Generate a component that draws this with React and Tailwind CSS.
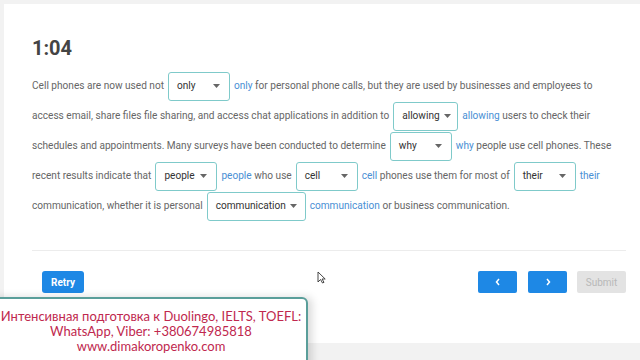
import React from "react";

function Sel({ value, w = "w-[62px]" }) {
  return (
    <span
      className={`inline-flex ${w} h-[29px] items-center justify-between align-middle border border-[#7fcaca] rounded-[3px] pl-[8px] pr-[9px] mx-[4px] text-[#333] bg-white whitespace-nowrap`}
    >
      <span>{value}</span>
      <svg width="7" height="4" viewBox="0 0 7 4" className="ml-[4px] shrink-0">
        <path d="M0 0 L7 0 L3.5 4 Z" fill="#666" />
      </svg>
    </span>
  );
}

function Ans({ children }) {
  return <span className="text-[#4a8fd4]">{children}</span>;
}

export default function App() {
  return (
    <div
      className="relative w-[640px] h-[360px] overflow-hidden bg-[#f2f2f2]"
      style={{ fontFamily: "Roboto, 'Liberation Sans', sans-serif" }}
    >
      <div className="ml-[4px] mt-[4px] h-[339px] bg-white pl-[28px] pr-[14px] pt-[32px]">
        <div className="text-[20px] font-bold text-[#444] leading-[24px]">1:04</div>
        <div className="mt-[11px] w-[590px] text-[10.1px] leading-[30px] text-[#666]">
          Cell phones are now used not<Sel value="only" />
          <Ans>only</Ans> for personal phone calls, but they are used by businesses and employees to
          access email, share files file sharing, and access chat applications in addition to
          <Sel value="allowing" w="w-[65px]" />
          <Ans>allowing</Ans> users to check their schedules and appointments. Many surveys have been
          conducted to determine<Sel value="why" />
          <Ans>why</Ans> people use cell phones. These recent results indicate that
          <Sel value="people" />
          <Ans>people</Ans> who use<Sel value="cell" />
          <Ans>cell</Ans> phones use them for most of<Sel value="their" />
          <Ans>their</Ans> communication, whether it is personal
          <Sel value="communication" w="w-[99px]" />
          <Ans>communication</Ans> or business communication.
        </div>
        <div className="mt-[29px] h-px bg-[#ececec] w-[594px]" />
        <div className="mt-[20px] flex items-center w-[594px] pl-[10px]">
          <button className="h-[22px] w-[42px] rounded-[3px] bg-[#1e88e5] text-white text-[10px] font-bold">
            Retry
          </button>
          <div className="flex-1" />
          <button className="h-[22px] w-[39px] rounded-[2px] bg-[#1e88e5] flex items-center justify-center">
            <svg width="8" height="8" viewBox="0 0 8 8">
              <path d="M5 1 L2.5 4 L5 7" stroke="white" strokeWidth="1.5" fill="none" />
            </svg>
          </button>
          <button className="ml-[11px] h-[22px] w-[39px] rounded-[2px] bg-[#1e88e5] flex items-center justify-center">
            <svg width="8" height="8" viewBox="0 0 8 8">
              <path d="M3 1 L5.5 4 L3 7" stroke="white" strokeWidth="1.5" fill="none" />
            </svg>
          </button>
          <button className="ml-[10px] h-[22px] w-[49px] rounded-[2px] bg-[#e3e3e3] text-[#b8b8b8] text-[10px]">
            Submit
          </button>
        </div>
      </div>

      <svg
        className="absolute left-[317px] top-[271px]"
        width="9"
        height="13"
        viewBox="0 0 9 13"
      >
        <path d="M1 1 L1 11 L3.5 8.5 L5.5 12 L7 11.3 L5 8 L8.2 8 Z" fill="white" stroke="#333" strokeWidth="0.9" />
      </svg>

      <div
        className="absolute left-[-10px] top-[297px] w-[318px] h-[80px] bg-white border-2 border-[#5a9e9a] rounded-tr-[6px] shadow-[4px_0_8px_rgba(0,0,0,0.15)] pt-[10px] pl-[4px] text-center text-[13px] leading-[15px] text-[#c0284e] whitespace-nowrap"
        style={{ fontFamily: "Lato, 'Open Sans', sans-serif" }}
      >
        <div>Интенсивная подготовка к Duolingo, IELTS, TOEFL:</div>
        <div>WhatsApp, Viber: +380674985818</div>
        <div>www.dimakoropenko.com</div>
      </div>
    </div>
  );
}
